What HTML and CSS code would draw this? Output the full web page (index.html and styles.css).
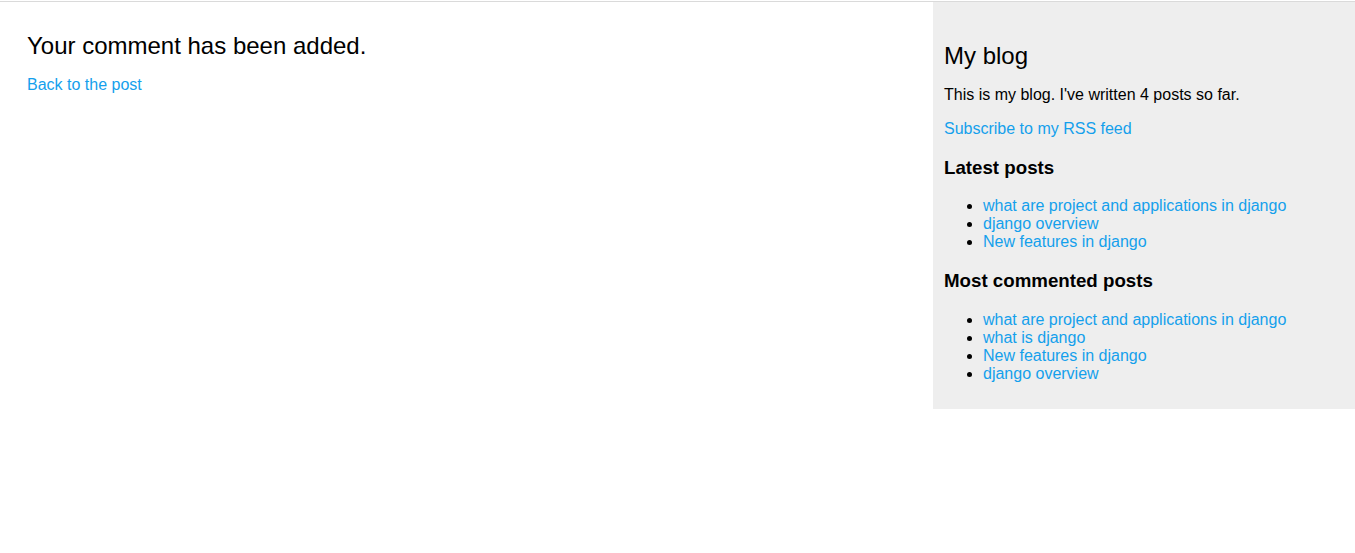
FILE: index.html
```html
<!DOCTYPE html>
<html>
<head>
<meta charset="utf-8">
<title>My blog</title>
<link rel="stylesheet" href="styles.css">
</head>
<body>
<div class="topline"></div>
<div class="layout">
  <div class="content">
    <h2>Your comment has been added.</h2>
    <p><a href="#">Back to the post</a></p>
  </div>
  <div class="sidebar">
    <h2>My blog</h2>
    <p>This is my blog. I've written 4 posts so far.</p>
    <p><a href="#">Subscribe to my RSS feed</a></p>
    <h3>Latest posts</h3>
    <ul>
      <li><a href="#">what are project and applications in django</a></li>
      <li><a href="#">django overview</a></li>
      <li><a href="#">New features in django</a></li>
    </ul>
    <h3>Most commented posts</h3>
    <ul>
      <li><a href="#">what are project and applications in django</a></li>
      <li><a href="#">what is django</a></li>
      <li><a href="#">New features in django</a></li>
      <li><a href="#">django overview</a></li>
    </ul>
  </div>
</div>
</body>
</html>
```
FILE: styles.css
```css
html, body {
  margin: 0;
  padding: 0;
  background: #fff;
}
body {
  font-family: "Liberation Sans", Arial, sans-serif;
  font-size: 16px;
  color: #000;
  padding-top: 1px;
}
a {
  color: #14a0ec;
  text-decoration: none;
}
.topline {
  height: 1px;
  background: #dadada;
}
.layout {
  display: flex;
  align-items: flex-start;
}
h2 {
  font-weight: normal;
  font-size: 24px;
  margin: 30px 0 0;
}
.content {
  flex: 1;
  padding: 0 0 0 27px;
}
.sidebar {
  width: 401px;
  padding: 10px 10px 10px 11px;
  background: #eeeeee;
}
.sidebar ul {
  padding-left: 39px;
}
```
